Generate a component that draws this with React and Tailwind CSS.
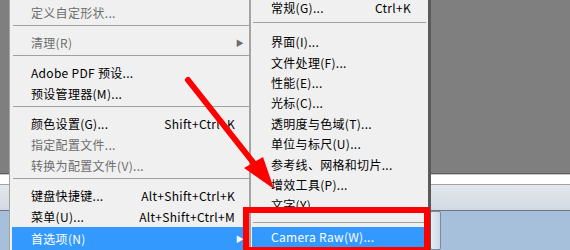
import React from 'react';

const leftMenu = [
  { label: '定义自定形状...', disabled: true },
  { sep: true },
  { label: '清理(R)', disabled: true, arrow: true },
  { sep: true },
  { label: 'Adobe PDF 预设...' },
  { label: '预设管理器(M)...' },
  { sep: true },
  { label: '颜色设置(G)...', key: 'Shift+Ctrl+K' },
  { label: '指定配置文件...', disabled: true },
  { label: '转换为配置文件(V)...', disabled: true },
  { sep: true },
  { label: '键盘快捷键...', key: 'Alt+Shift+Ctrl+K' },
  { label: '菜单(U)...', key: 'Alt+Shift+Ctrl+M' },
  { label: '首选项(N)', active: true, arrow: true },
];

const subMenu = [
  '界面(I)...',
  '文件处理(F)...',
  '性能(E)...',
  '光标(C)...',
  '透明度与色域(T)...',
  '单位与标尺(U)...',
  '参考线、网格和切片...',
  '增效工具(P)...',
  '文字(Y)...',
];

const font = { fontFamily: '"Noto Sans CJK SC", "Noto Sans", sans-serif' };

function LeftMenu() {
  return (
    <div className="absolute left-[9px] top-0 w-[240px] h-[250px] bg-[#f0f0f0] border-l border-[#a3a3a3] pt-[2px]">
      {leftMenu.map((item, i) =>
        item.sep ? (
          <div key={i} className="h-[9px] pt-[2px] pl-[3px]">
            <div className="h-px bg-[#a0a0a0]" />
          </div>
        ) : (
          <div
            key={i}
            className={`mx-[2px] pl-[19px] pr-[12px] flex items-center justify-between ${
              item.active ? 'h-[23px] bg-[#3399ff] text-white' : 'h-[21px]'
            } ${item.disabled ? 'text-[#6d6d6d]' : item.active ? '' : 'text-black'}`}
          >
            <span>{item.label}</span>
            {item.key && <span>{item.key}</span>}
            {item.arrow && (
              <span className={`text-[8px] -mr-[9px] ${item.active ? 'text-white' : 'text-[#6d6d6d]'}`}>▶</span>
            )}
          </div>
        )
      )}
    </div>
  );
}

function SubMenu() {
  return (
    <div className="absolute left-[249px] top-0 w-[182px] h-[250px] bg-[#f0f0f0] border-l-2 border-[#a3a3a3] border-r-[3px] border-r-[#5a5a5a]">
      <div className="-mt-[2px] h-[20.4px] pl-[20px] pr-[17px] flex items-center justify-between text-black">
        <span>常规(G)...</span>
        <span>Ctrl+K</span>
      </div>
      <div className="h-[13.6px] pt-[4px] px-[2px]">
        <div className="h-px bg-[#a0a0a0]" />
      </div>
      {subMenu.map((label) => (
        <div key={label} className="h-[20.4px] pl-[20px] flex items-center text-black">
          {label}
        </div>
      ))}
      <div className="h-[11.6px] pt-[6px] px-[2px]">
        <div className="h-px bg-[#a0a0a0]" />
      </div>
      <div className="h-[20.4px] ml-[1px] mr-[2px] pl-[19px] flex items-center bg-[#3399ff] text-white">
        Camera Raw(W)...
      </div>
    </div>
  );
}

function Annotation() {
  return (
    <svg className="absolute inset-0" width="570" height="250" viewBox="0 0 570 250">
      <line x1="188" y1="80" x2="256" y2="166" stroke="#ff0000" strokeWidth="6" strokeLinecap="round" />
      <polygon points="244,168 263,157 274,189" fill="#ff0000" />
      <rect x="246" y="210" width="181" height="40" fill="none" stroke="#ff0000" strokeWidth="6" />
    </svg>
  );
}

export default function App() {
  return (
    <div className="relative w-[570px] h-[250px] overflow-hidden text-[12px] leading-none tracking-[0.3px]" style={font}>
      {/* workspace behind the menus */}
      <div className="flex flex-col h-full">
        <div className="h-[173px] bg-[#7f7f7f]" />
        <div className="h-px bg-[#5f5f5f]" />
        <div className="h-px bg-[#c4c4c4]" />
        <div className="h-[9px] bg-white" />
        <div className="h-px bg-[#a3a3a3]" />
        <div className="h-[25px] bg-gradient-to-b from-[#e3e7ed] to-[#d3d9e2]" />
        <div className="h-px bg-[#6c7480]" />
        <div className="flex-1 bg-[#a6bfdb] flex">
          <div className="ml-[430px] w-[11px] h-full bg-gradient-to-r from-[#e6ecf3] to-[#cfd9e6] border border-[#7d8a9c] rounded-[2px]" />
        </div>
      </div>

      <LeftMenu />
      <SubMenu />
      <Annotation />
    </div>
  );
}
